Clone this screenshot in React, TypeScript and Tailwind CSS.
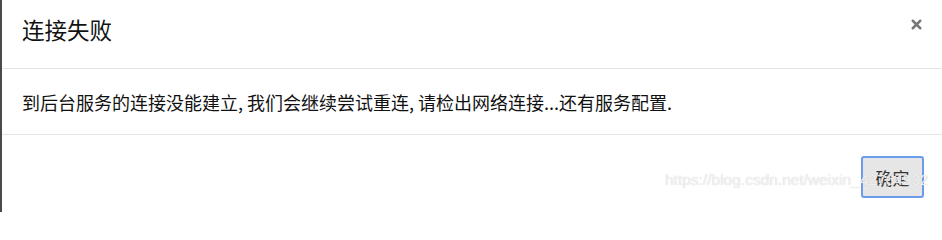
import { X } from 'lucide-react';

export default function App() {
  return (
    <div className="relative w-[942px] h-[212px] overflow-hidden bg-white border-l-2 border-[#4a4a4a] text-[#111] [font-family:'Noto_Sans_CJK_SC',sans-serif]">
      {/* header */}
      <div className="h-[69px] flex items-center justify-between pl-[20px] pr-[18px] border-b border-[#e5e5e5]">
        <h4 className="text-[22.5px] leading-none font-normal mb-[10px]">连接失败</h4>
        <button className="text-[#777] mb-[20px]">
          <X size={15} strokeWidth={4} />
        </button>
      </div>

      {/* body */}
      <div className="h-[66px] flex items-center pl-[20px] border-b border-[#e5e5e5]">
        <p className="text-[18px] leading-none">
          到后台服务的连接没能建立, 我们会继续尝试重连, 请检出网络连接...还有服务配置.
        </p>
      </div>

      {/* footer */}
      <div className="flex justify-end pt-[21px] pr-[18px]">
        <button className="w-[63px] h-[42px] rounded-[3px] bg-[#e6e6e6] border-2 border-[#6b9bea] text-[17px] text-[#333] leading-none">
          确定
        </button>
      </div>

      {/* csdn watermark */}
      <span className="absolute left-[663px] top-[172px] text-[15.5px] leading-none text-white/70 [text-shadow:0_0_1px_#c8c8c8] [font-family:'Liberation_Sans',Arial,sans-serif] pointer-events-none whitespace-nowrap">
        https://blog.csdn.net/weixin_42764932
      </span>
    </div>
  );
}
